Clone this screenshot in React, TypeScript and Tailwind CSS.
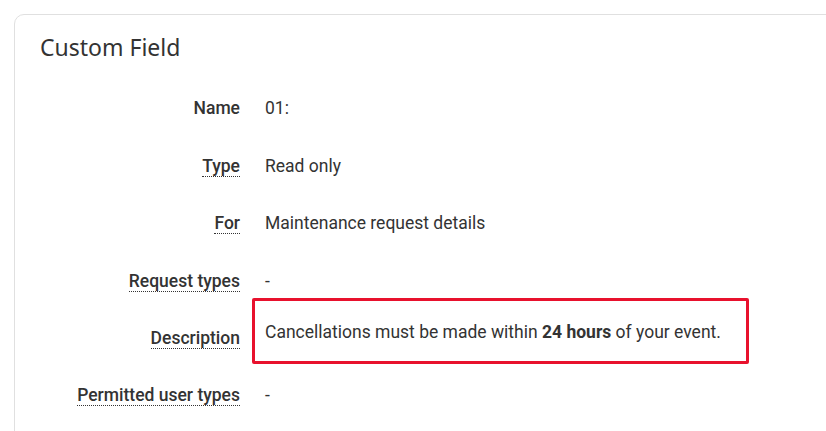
import React from 'react';

type Row = {
  label: string;
  value: React.ReactNode;
  dotted?: boolean;
  top: string;
};

const rows: Row[] = [
  { label: 'Name', value: '01:', top: 'mt-[34px]' },
  { label: 'Type', value: 'Read only', dotted: true, top: 'mt-[34px]' },
  { label: 'For', value: 'Maintenance request details', dotted: true, top: 'mt-[33px]' },
  { label: 'Request types', value: '-', dotted: true, top: 'mt-[34px]' },
];

export default function App() {
  return (
    <div className="h-[431px] w-[826px] overflow-hidden bg-white pl-[14px] pt-[14px] font-['Roboto',sans-serif] text-[#333]">
      <div className="h-[480px] w-[900px] rounded-[10px] border border-[#e0e0e0] bg-white">
        {/* title */}
        <h1 className="ml-[25px] mt-[17px] font-['Noto_Sans',sans-serif] text-[23px] leading-[30px] font-normal text-[#333]">
          Custom Field
        </h1>

        {/* details */}
        <div className="flex flex-col text-[17.5px] leading-6">
          {rows.map((row) => (
            <div key={row.label} className={`flex ${row.top}`}>
              <div className="w-[225px] shrink-0 text-right font-medium">
                <span className={row.dotted ? 'border-b border-dotted border-[#333]' : ''}>{row.label}</span>
              </div>
              <div className="ml-[25px]">{row.value}</div>
            </div>
          ))}

          <div className="mt-[5px] flex">
            <div className="w-[225px] shrink-0 pt-[28px] text-right font-medium">
              <span className="border-b border-dotted border-[#333]">Description</span>
            </div>
            <div className="ml-[12px] h-[66px] w-[497px] rounded-[2px] border-[3px] border-[#e8112d] pl-[10px] pt-[19px]">
              Cancellations must be made within <strong className="font-bold">24 hours</strong> of your event.
            </div>
          </div>

          <div className="mt-[19px] flex">
            <div className="w-[225px] shrink-0 text-right font-medium">
              <span className="border-b border-dotted border-[#333]">Permitted user types</span>
            </div>
            <div className="ml-[25px]">-</div>
          </div>
        </div>
      </div>
    </div>
  );
}
